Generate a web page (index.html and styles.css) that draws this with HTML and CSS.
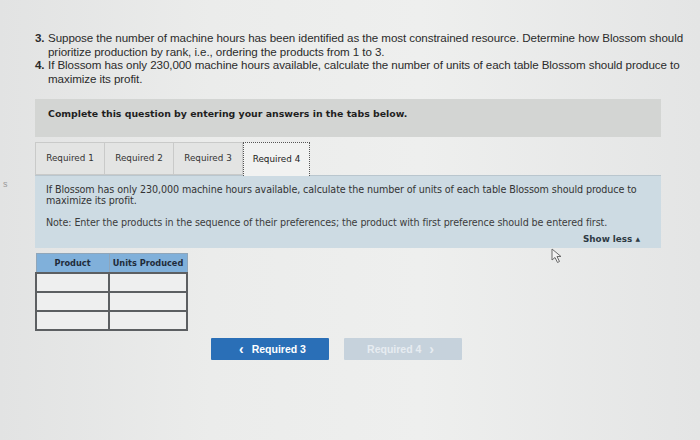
FILE: index.html
```html
<!DOCTYPE html>
<html>
<head>
<meta charset="utf-8">
<link rel="stylesheet" href="styles.css">
</head>
<body>
<div class="page">
  <span class="edge-mark">s</span>
  <div class="questions">
    <div class="q"><b class="num">3.</b><span>Suppose the number of machine hours has been identified as the most constrained resource. Determine how Blossom should prioritize production by rank, i.e., ordering the products from 1 to 3.</span></div>
    <div class="q"><b class="num">4.</b><span>If Blossom has only 230,000 machine hours available, calculate the number of units of each table Blossom should produce to maximize its profit.</span></div>
  </div>

  <div class="instructions">Complete this question by entering your answers in the tabs below.</div>

  <div class="tabs">
    <div class="tab">Required 1</div>
    <div class="tab">Required 2</div>
    <div class="tab">Required 3</div>
    <div class="tab active">Required 4</div>
  </div>

  <div class="panel">
    <p class="prompt">If Blossom has only 230,000 machine hours available, calculate the number of units of each table Blossom should produce to maximize its profit.</p>
    <p class="note">Note: Enter the products in the sequence of their preferences; the product with first preference should be entered first.</p>
    <div class="show-less">Show less <span class="tri">&#9650;</span></div>
  </div>

  <table class="answers">
    <thead>
      <tr><th class="c1">Product</th><th class="c2">Units Produced</th></tr>
    </thead>
    <tbody>
      <tr><td></td><td></td></tr>
      <tr><td></td><td></td></tr>
      <tr><td></td><td></td></tr>
    </tbody>
  </table>

  <div class="nav">
    <button class="btn prev"><span class="chev">&lsaquo;</span> Required 3</button>
    <button class="btn next" disabled>Required 4 <span class="chev">&rsaquo;</span></button>
  </div>

  <svg class="cursor" width="12" height="16" viewBox="0 0 12 16">
    <path d="M1 1 L1 12 L4 9.5 L6.5 14.5 L8.5 13.5 L6 8.5 L10 8.5 Z" fill="#f2f2f2" stroke="#6a6a6a" stroke-width="1"/>
  </svg>
</div>
</body>
</html>
```

FILE: styles.css
```css
html, body {
  margin: 0;
  padding: 0;
}
body {
  width: 700px;
  height: 440px;
  overflow: hidden;
  background: linear-gradient(90deg, #e2e3e3 0%, #ebeceb 30%, #eeefee 60%, #e4e5e5 100%);
  font-family: "Liberation Sans", Arial, sans-serif;
}
.page {
  position: relative;
  padding: 31px 0 0 35px;
  height: 409px;
}
.edge-mark {
  position: absolute;
  left: 3px;
  top: 179px;
  font-size: 9px;
  color: #9a9a9a;
}
.questions {
  width: 655px;
  font-size: 11.6px;
  line-height: 13.6px;
  color: #2b2b2b;
  letter-spacing: -0.08px;
}
.q {
  display: flex;
}
.q .num {
  width: 13px;
  flex: none;
  font-weight: bold;
}
.instructions {
  margin-top: 14px;
  width: 626px;
  box-sizing: border-box;
  height: 38px;
  padding: 9px 0 0 13px;
  background: #d3d5d3;
  font-family: "DejaVu Sans", Verdana, sans-serif;
  font-weight: bold;
  font-size: 9.4px;
  color: #1f1f1f;
}
.tabs {
  display: flex;
  margin-top: 5px;
  height: 33px;
  position: relative;
  z-index: 1;
}
.tab {
  width: 69px;
  box-sizing: border-box;
  height: 33px;
  padding-top: 10px;
  text-align: center;
  background: #e3e4e3;
  border: 1px solid #c9cac9;
  border-right: none;
  font-family: "DejaVu Sans", Verdana, sans-serif;
  font-size: 8.8px;
  color: #333;
}
.tab:nth-child(3) {
  width: 70px;
  border-right: 1px solid #c9cac9;
}
.tab.active {
  width: 67px;
  height: 34px;
  padding-top: 11px;
  background: #f1f2f1;
  border: 1px dotted #555;
  border-bottom: none;
  color: #222;
}
.panel {
  width: 626px;
  box-sizing: border-box;
  height: 73px;
  padding: 8px 20px 0 11px;
  background: #cddbe3;
  border-top: 1px solid #b9c6ce;
  font-family: "DejaVu Sans", Verdana, sans-serif;
  font-size: 9.6px;
  line-height: 11px;
  color: #333;
}
.panel p {
  margin: 0;
}
.prompt {
  letter-spacing: -0.1px;
}
.note {
  margin-top: 11px !important;
  color: #3c3c3c;
  letter-spacing: -0.1px;
}
.show-less {
  text-align: right;
  margin-top: 5px;
  padding-right: 1px;
  font-weight: bold;
  font-size: 8.8px;
  color: #2d3a44;
}
.show-less .tri {
  font-size: 6px;
  vertical-align: 1px;
}
.answers {
  margin-top: 5px;
  border-collapse: collapse;
  font-family: "DejaVu Sans", Verdana, sans-serif;
}
.answers th {
  height: 18px;
  padding: 0;
  background: #80b0da;
  border: 1px solid #8fa6ba;
  font-size: 8.2px;
  font-weight: bold;
  color: #1f2c3a;
}
.answers th.c1 {
  width: 72px;
}
.answers th.c2 {
  width: 77px;
}
.answers td {
  height: 17px;
  padding: 0;
  background: #eeefef;
  border: 2px solid #5c5f62;
}
.nav {
  display: flex;
  gap: 15px;
  margin-top: 7px;
  margin-left: 176px;
}
.btn {
  width: 118px;
  height: 22px;
  border: none;
  border-radius: 1px;
  font-family: "Liberation Sans", Arial, sans-serif;
  font-weight: bold;
  font-size: 10.5px;
  padding: 0;
}
.btn.prev {
  background: #2a6fb7;
  color: #fff;
}
.btn.next {
  background: #c6d2dc;
  color: #e6ecf1;
}
.chev {
  font-size: 14px;
  font-weight: bold;
  margin: 0 5px;
  vertical-align: -1px;
}
.cursor {
  position: absolute;
  left: 551px;
  top: 248px;
}
```
